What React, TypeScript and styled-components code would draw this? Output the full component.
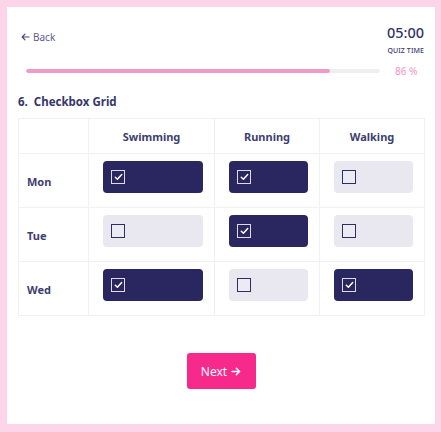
import React, { useState } from "react";
import styled, { createGlobalStyle } from "styled-components";

const Global = createGlobalStyle`
  html, body { margin: 0; padding: 0; }
  body {
    background: #fdd5ea;
    font-family: "Noto Sans", "Open Sans", sans-serif;
    color: #34346a;
  }
  * { box-sizing: border-box; }
`;

const Page = styled.div`
  padding: 7px 6px 8px 7px;
`;

const Card = styled.div`
  background: #ffffff;
  height: 417px;
  padding: 11px 11px 0 11px;
  display: flex;
  flex-direction: column;
`;

const Header = styled.div`
  display: flex;
  justify-content: space-between;
  align-items: flex-start;
  padding-left: 3px;
`;

const BackLink = styled.a`
  margin-top: 12px;
  font-size: 10px;
  color: #5b5b8c;
  display: flex;
  align-items: center;
  gap: 3px;
  cursor: pointer;
`;

const Timer = styled.div`
  display: flex;
  flex-direction: column;
  align-items: flex-end;
`;

const Time = styled.div`
  font-size: 14.5px;
  line-height: 20px;
  margin-top: 4px;
  color: #34346a;
  font-weight: 500;
`;

const TimeLabel = styled.div`
  font-size: 7px;
  line-height: 10px;
  margin-top: 4px;
  letter-spacing: 0.1px;
  color: #3b3b6e;
  font-weight: 500;
`;

const ProgressRow = styled.div`
  display: flex;
  align-items: center;
  padding: 0 8px;
  margin-top: 8px;
  gap: 15px;
`;

const Track = styled.div`
  flex: 1;
  height: 4px;
  background: #efeff2;
  border-radius: 2px;
  overflow: hidden;
`;

const Fill = styled.div`
  height: 100%;
  background: #f29ac7;
  border-radius: 2px;
`;

const Percent = styled.div`
  font-size: 10px;
  font-weight: 500;
  color: #f7a3cc;
  width: 21px;
  text-align: right;
  white-space: nowrap;
`;

const Title = styled.h2`
  margin: 16px 0 0 0;
  font-size: 11.5px;
  line-height: 16px;
  font-weight: 700;
  color: #36366b;
  white-space: pre;
`;

const Table = styled.table`
  margin-top: 8px;
  border-collapse: collapse;
  width: 406px;
  table-layout: fixed;
`;

const Th = styled.th`
  border: 1px solid #f1f1f4;
  height: 35px;
  font-size: 11px;
  font-weight: 700;
  color: #3e3e70;
  text-align: center;
  padding: 1px 0 0 0;
`;

const RowLabel = styled.td`
  border: 1px solid #f1f1f4;
  height: 54px;
  padding: 2px 0 0 8px;
  font-size: 11px;
  font-weight: 700;
  color: #3e3e70;
`;

const Cell = styled.td`
  border: 1px solid #f1f1f4;
  height: 54px;
  padding: 0 11px 7px 14px;
  vertical-align: middle;
`;

const OptionButton = styled.button<{ $on: boolean }>`
  display: flex;
  align-items: center;
  width: 100%;
  height: 32px;
  padding: 0 0 0 8px;
  border: none;
  border-radius: 4px;
  background: ${(p) => (p.$on ? "#2a2760" : "#e9e8f0")};
  cursor: pointer;
`;

const Box = styled.span<{ $on: boolean }>`
  width: 14px;
  height: 14px;
  border: 1.5px solid ${(p) => (p.$on ? "#dcdbe8" : "#2f2c66")};
  background: ${(p) => (p.$on ? "#2a2760" : "#ecebf2")};
  display: flex;
  align-items: center;
  justify-content: center;
`;

const NextRow = styled.div`
  display: flex;
  justify-content: center;
  margin-top: 37px;
`;

const NextButton = styled.button`
  width: 69px;
  height: 36px;
  border: none;
  border-radius: 3px;
  background: #f72a8b;
  color: #ffffff;
  font-family: "Noto Sans", "Open Sans", sans-serif;
  font-size: 12px;
  display: flex;
  align-items: center;
  justify-content: center;
  gap: 4px;
  cursor: pointer;
`;

const cols = ["Swimming", "Running", "Walking"];
const rows = ["Mon", "Tue", "Wed"];
const initial = [
  [true, true, false],
  [false, true, false],
  [true, false, true],
];

const Check = () => (
  <svg width="9" height="8" viewBox="0 0 9 8">
    <path d="M1.3 4.3 L3.4 6.2 L7.7 1.6" fill="none" stroke="#ffffff" strokeWidth="1.5" strokeLinecap="round" strokeLinejoin="round" />
  </svg>
);

export default function App() {
  const [grid, setGrid] = useState(initial);
  const toggle = (r: number, c: number) =>
    setGrid((g) => g.map((row, i) => row.map((v, j) => (i === r && j === c ? !v : v))));
  const progress = 86;
  return (
    <Page>
      <Global />
      <Card>
        <Header>
          <BackLink>
            <svg width="9" height="8" viewBox="0 0 9 8">
              <path d="M8 4 H1.3 M4 1.2 L1.2 4 L4 6.8" fill="none" stroke="#4a4a7c" strokeWidth="1.2" strokeLinecap="round" strokeLinejoin="round" />
            </svg>
            Back
          </BackLink>
          <Timer>
            <Time>05:00</Time>
            <TimeLabel>QUIZ TIME</TimeLabel>
          </Timer>
        </Header>
        <ProgressRow>
          <Track>
            <Fill style={{ width: `${progress}%` }} />
          </Track>
          <Percent>{progress} %</Percent>
        </ProgressRow>
        <Title>{"6.  Checkbox Grid"}</Title>
        <Table>
          <colgroup>
            <col style={{ width: 70 }} />
            <col style={{ width: 126 }} />
            <col style={{ width: 105 }} />
            <col style={{ width: 105 }} />
          </colgroup>
          <thead>
            <tr>
              <Th />
              {cols.map((c) => (
                <Th key={c}>{c}</Th>
              ))}
            </tr>
          </thead>
          <tbody>
            {rows.map((r, i) => (
              <tr key={r}>
                <RowLabel>{r}</RowLabel>
                {cols.map((c, j) => (
                  <Cell key={c}>
                    <OptionButton $on={grid[i][j]} onClick={() => toggle(i, j)}>
                      <Box $on={grid[i][j]}>{grid[i][j] && <Check />}</Box>
                    </OptionButton>
                  </Cell>
                ))}
              </tr>
            ))}
          </tbody>
        </Table>
        <NextRow>
          <NextButton>
            Next
            <svg width="10" height="9" viewBox="0 0 10 9">
              <path d="M1 4.5 H8.5 M5.3 1.2 L8.6 4.5 L5.3 7.8" fill="none" stroke="#ffffff" strokeWidth="1.5" strokeLinecap="round" strokeLinejoin="round" />
            </svg>
          </NextButton>
        </NextRow>
      </Card>
    </Page>
  );
}
